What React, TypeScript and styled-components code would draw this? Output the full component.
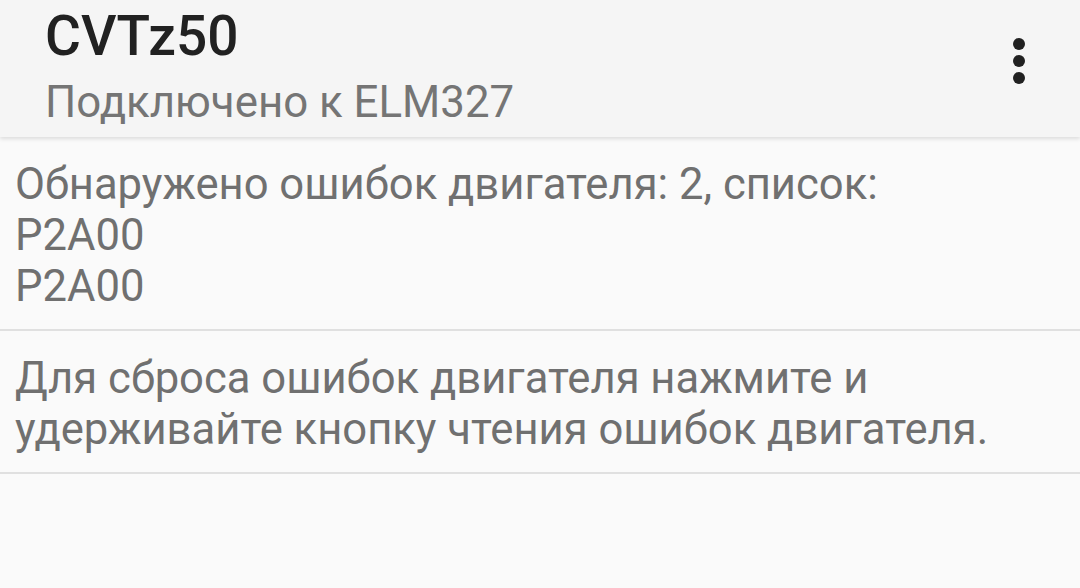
import styled, { createGlobalStyle } from 'styled-components'

const GlobalStyle = createGlobalStyle`
	html, body {
		margin: 0;
		padding: 0;
		background: #fafafa;
	}
	body {
		font-family: Roboto, 'Noto Sans', sans-serif;
	}
`

const Screen = styled.div`
	width: 1080px;
	height: 588px;
	background: #fafafa;
	overflow: hidden;
`

const AppBar = styled.header`
	height: 137px;
	background: #f5f5f5;
	box-shadow: 0 2px 4px rgba(0, 0, 0, 0.12);
	display: flex;
	flex-direction: row;
	justify-content: space-between;
	position: relative;
	z-index: 1;
`

const AppBarTitles = styled.div`
	display: flex;
	flex-direction: column;
	padding: 5px 0 0 45px;
`

const AppBarTitle = styled.h1`
	margin: 0;
	font-size: 55px;
	font-weight: 500;
	line-height: 62px;
	color: #212121;
`

const AppBarSubtitle = styled.h2`
	margin: 9px 0 0;
	font-size: 43.8px;
	font-weight: 400;
	line-height: 52px;
	color: #757575;
`

const MenuButton = styled.div`
	width: 80px;
	display: flex;
	flex-direction: column;
	align-items: center;
	padding-top: 38px;
	margin-right: 21px;
	gap: 5px;
`

const MenuDot = styled.span`
	width: 12px;
	height: 12px;
	border-radius: 50%;
	background: #212121;
`

const Section = styled.section`
	padding: 22px 15px 17px;
	border-bottom: 2px solid #e0e0e0;
`

const SectionText = styled.p`
	margin: 0;
	font-size: 43.6px;
	line-height: 51px;
	color: #707070;
`

const errors = ['P2A00', 'P2A00']

export default function App() {
	return (
		<Screen>
			<GlobalStyle />
			<AppBar>
				<AppBarTitles>
					<AppBarTitle>CVTz50</AppBarTitle>
					<AppBarSubtitle>Подключено к ELM327</AppBarSubtitle>
				</AppBarTitles>
				<MenuButton>
					<MenuDot />
					<MenuDot />
					<MenuDot />
				</MenuButton>
			</AppBar>
			<Section>
				<SectionText>
					Обнаружено ошибок двигателя: {errors.length}, список:
					{errors.map((e, i) => (
						<span key={i}>
							<br />
							{e}
						</span>
					))}
				</SectionText>
			</Section>
			<Section>
				<SectionText>
					Для сброса ошибок двигателя нажмите и
					<br />
					удерживайте кнопку чтения ошибок двигателя.
				</SectionText>
			</Section>
		</Screen>
	)
}
